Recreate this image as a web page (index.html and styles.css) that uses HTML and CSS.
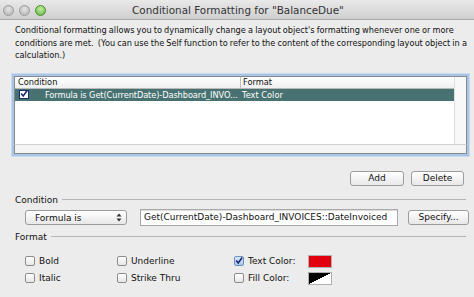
FILE: index.html
```html
<!DOCTYPE html>
<html>
<head>
<meta charset="utf-8">
<link rel="stylesheet" href="styles.css">
</head>
<body>
<div class="window">
  <div class="titlebar">
    <div class="lights">
      <span class="light"></span><span class="light"></span><span class="light green"></span>
    </div>
    <div class="title">Conditional Formatting for "BalanceDue"</div>
  </div>
  <div class="content">
    <p class="desc">Conditional formatting allows you to dynamically change a layout object's formatting whenever one or more conditions are met.&nbsp; (You can use the Self function to refer to the content of the corresponding layout object in a calculation.)</p>

    <div class="list">
      <div class="list-inner">
        <div class="list-main">
          <div class="list-head">
            <div class="col-cond">Condition</div>
            <div class="col-fmt">Format</div>
          </div>
          <div class="list-row selected">
            <div class="col-cond">
              <span class="row-check"><svg width="10" height="9" viewBox="0 0 10 9"><path d="M1.5 4.5 L4 7.5 L9 0.8" fill="none" stroke="#1a2a6c" stroke-width="2"/></svg></span>
              <span class="row-text">Formula is Get(CurrentDate)-Dashboard_INVO...</span>
            </div>
            <div class="col-fmt">Text Color</div>
          </div>
          <div class="list-body"></div>
        </div>
        <div class="vscroll"></div>
      </div>
      <div class="hscroll"></div>
    </div>

    <div class="btn-row">
      <button class="btn add">Add</button>
      <button class="btn delete">Delete</button>
    </div>

    <div class="group-label"><span>Condition</span><span class="rule"></span></div>
    <div class="cond-row">
      <div class="popup"><span>Formula is</span>
        <svg class="arrows" width="6" height="9" viewBox="0 0 6 9"><path d="M0.5 3.5 L3 0.5 L5.5 3.5 Z M0.5 5.5 L3 8.5 L5.5 5.5 Z" fill="#333"/></svg>
      </div>
      <div class="field">Get(CurrentDate)-Dashboard_INVOICES::DateInvoiced</div>
      <button class="btn specify">Specify...</button>
    </div>

    <div class="group-label fmt"><span>Format</span><span class="rule"></span></div>
    <div class="fmt-grid">
      <label class="cb"><span class="box"></span>Bold</label>
      <label class="cb"><span class="box"></span>Underline</label>
      <label class="cb color"><span class="box checked"><svg width="10" height="9" viewBox="0 0 10 9"><path d="M1.5 4.5 L4 7.5 L9 0.8" fill="none" stroke="#1a2a6c" stroke-width="2"/></svg></span><span class="cl">Text Color:</span><span class="swatch red"></span></label>
      <label class="cb"><span class="box"></span>Italic</label>
      <label class="cb"><span class="box"></span>Strike Thru</label>
      <label class="cb color"><span class="box"></span><span class="cl">Fill Color:</span><span class="swatch fill"></span></label>
    </div>
  </div>
</div>
</body>
</html>
```
FILE: styles.css
```css
* { box-sizing: border-box; }
html, body { margin: 0; padding: 0; }
body {
  width: 474px;
  height: 297px;
  overflow: hidden;
  background: #ececec;
  font-family: "DejaVu Sans", "Liberation Sans", sans-serif;
  font-size: 8.25px;
  color: #111;
}
.window { width: 474px; height: 297px; background: #ececec; }
.titlebar {
  height: 20px;
  display: flex;
  align-items: center;
  position: relative;
  background: linear-gradient(#e9e9e9, #cfcfcf);
  border-bottom: 1px solid #a8a8a8;
}
.lights { display: flex; gap: 5px; padding-left: 3px; padding-top: 2px; }
.light {
  width: 11px; height: 11px; border-radius: 50%;
  background: radial-gradient(circle at 50% 35%, #e4e4e4, #b0b0b0);
  border: 1px solid #9a9a9a;
}
.light.green {
  background: radial-gradient(circle at 50% 35%, #c8f0a0, #58b03a);
  border-color: #4d8f33;
}
.title {
  flex: 1;
  text-align: center;
  font-size: 10.4px;
  color: #333;
  padding-right: 44px;
  padding-top: 1px;
}
.content { padding: 4px 5px 0 15px; }
.desc { margin: 0; line-height: 12.5px; width: 454px; font-size: 8.2px; word-spacing: -0.45px; }

.list {
  margin-top: 12px;
  margin-left: -3px;
  width: 457px;
  height: 82px;
  border: 2px solid #a8c4e6;
  box-shadow: 0 0 0 1px #c9daf0;
  background: #fff;
  display: flex;
  flex-direction: column;
}
.list-inner { flex: 1; display: flex; border: 1px solid #8a8a8a; border-bottom: none; }
.list-main { flex: 1; display: flex; flex-direction: column; }
.list-head {
  display: flex;
  height: 12px;
  line-height: 11px;
  background: linear-gradient(#ffffff, #f0f0f0);
  border-bottom: 1px solid #b9b9b9;
}
.list-head .col-fmt { border-left: 1px solid #c0c0c0; }
.col-cond { width: 225px; padding-left: 3px; display: flex; align-items: center; white-space: nowrap; overflow: hidden; }
.col-fmt { flex: 1; padding-left: 2px; white-space: nowrap; }
.list-row.selected {
  display: flex;
  height: 12px;
  line-height: 12px;
  background: #487271;
  color: #fff;
}
.row-check {
  flex: none;
  width: 10px; height: 9px;
  background: #fff;
  border: 1px solid #1a2a6c;
  display: inline-flex; align-items: center; justify-content: center;
  margin-left: 1px;
}
.row-check svg { margin-top: -2px; }
.row-text { margin-left: 16px; letter-spacing: -0.1px; }
.list-body { flex: 1; background: #fff; }
.vscroll { width: 12px; background: #f8f8f8; border-left: 1px solid #dcdcdc; }
.hscroll { height: 10px; background: #f4f4f4; border: 1px solid #8a8a8a; border-top: 1px solid #d0d0d0; }

.btn {
  font-family: inherit;
  font-size: 9px;
  color: #111;
  height: 15px;
  border: 1px solid #9c9c9c;
  border-radius: 3px;
  background: linear-gradient(#ffffff, #e8e8e8);
  padding: 0;
  line-height: 13px;
}
.btn-row { display: flex; justify-content: flex-end; gap: 7px; margin-top: 15px; padding-right: 5px; }
.btn.add { width: 54px; }
.btn.delete { width: 53px; }

.group-label { display: flex; align-items: center; gap: 4px; margin-top: 8px; height: 12px; font-size: 9px; }
.group-label .rule { flex: 1; height: 1px; background: #b5b5b5; margin-right: 3px; }
.group-label.fmt { margin-top: 4px; }

.cond-row { display: flex; align-items: center; margin-top: 3px; height: 18px; }
.popup {
  margin-left: 10px;
  width: 102px; height: 15px;
  border: 1px solid #9c9c9c; border-radius: 3px;
  background: linear-gradient(#ffffff, #e8e8e8);
  display: flex; align-items: center; justify-content: space-between;
  padding: 0 4px 0 9px;
  font-size: 9px;
}
.field {
  margin-left: 13px;
  width: 258px; height: 17px;
  background: #fff;
  border: 1px solid #a9a9a9;
  box-shadow: inset 0 1px 1px rgba(0,0,0,0.15);
  font-size: 9px;
  line-height: 15px;
  padding-left: 3px;
  white-space: nowrap;
  overflow: hidden;
}
.btn.specify { margin-left: 10px; width: 61px; }

.fmt-grid {
  display: grid;
  grid-template-columns: 92px 117px 1fr;
  grid-auto-rows: 17px;
  margin-top: 10px;
  padding-left: 10px;
  font-size: 9px;
}
.cb { display: flex; align-items: center; gap: 4px; }
.box {
  width: 10px; height: 10px;
  border: 1px solid #8c8c8c;
  border-radius: 2px;
  background: linear-gradient(#ffffff, #e6e6e6);
  display: inline-flex; align-items: center; justify-content: center;
}
.box.checked { background: linear-gradient(#d8e8fa, #a9c8ee); border-color: #6b8fc0; }
.box.checked svg { margin-top: -2px; }
.color .cl { width: 56px; }
.swatch { width: 24px; height: 13px; border: 1px solid #b0b0b0; }
.swatch.red { background: #e2000e; }
.swatch.fill { background: linear-gradient(to bottom right, #000 50%, #fff 50%); }
```
